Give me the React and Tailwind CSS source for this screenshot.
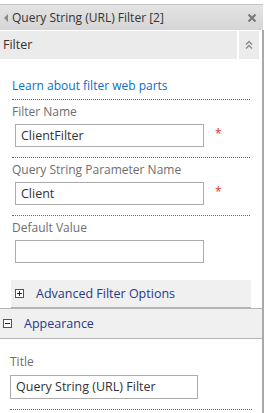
const Field = ({ label, value, required, last }) => (
    <div className={`pt-[4px] pb-[10px] ${last ? '' : 'border-b border-dotted border-[#4a63c8]'}`}>
        <div className="text-[12px] leading-[16px] text-[#6e6e6e]">{label}</div>
        <div className="mt-[4px] flex items-center">
            <div className="ml-[3px] w-[189px] h-[23px] border border-[#ababab] bg-white px-[5px] text-[12.5px] leading-[21px] text-[#333]">
                {value}
            </div>
            {required && <span className="ml-[11px] -mt-[4px] text-[12px] leading-[16px] text-[#d9302c]">*</span>}
        </div>
    </div>
);

const App = () => {
    return (
        <div className="w-[265px] h-[413px] bg-white overflow-hidden pt-[4px]" style={{ fontFamily: '"Open Sans", "Noto Sans", sans-serif' }}>
            {/* tool pane header */}
            <div className="w-[263px] h-[26px] flex items-center border-t border-[#c4c4c4] bg-gradient-to-b from-[#e4e4e4] to-[#d5d5d5]">
                <svg width="8" height="10" viewBox="0 0 8 10" className="ml-[3px]">
                    <path d="M5 1 L1 5 L5 9 Z" fill="#8a8a8a" />
                </svg>
                <span className="ml-[1px] text-[12px] leading-[20px] text-[#333]">Query String (URL) Filter [2]</span>
                <svg width="10" height="10" viewBox="0 0 10 10" className="ml-auto mr-[6px]">
                    <path d="M1.5 1.5 L8.5 8.5 M8.5 1.5 L1.5 8.5" stroke="#7a7a7a" strokeWidth="2.2" />
                </svg>
            </div>

            <div className="w-[264px] border-r-2 border-[#a9a9a9]">
                {/* Filter section bar */}
                <div className="flex gap-[2px] pt-[1px] h-[29px]">
                    <div className="w-[237px] bg-[#ebebeb] pl-[3px] flex items-center text-[12.5px] text-[#333]">Filter</div>
                    <div className="w-[20px] bg-[#ebebeb] flex items-center justify-center">
                        <svg width="8" height="10" viewBox="0 0 8 10">
                            <path d="M1 4.5 L4 1.5 L7 4.5 M1 8.5 L4 5.5 L7 8.5" stroke="#8a8a8a" strokeWidth="1.4" fill="none" />
                        </svg>
                    </div>
                </div>

                <div className="px-[12px]">
                    <div className="pt-[19px] pb-[5px] text-[12px] leading-[16px] border-b border-dotted border-[#4a63c8]">
                        <span className="text-[#0a6fc2]">Learn about filter web parts</span>
                    </div>
                    <Field label="Filter Name" value="ClientFilter" required />
                    <Field label="Query String Parameter Name" value="Client" required />
                    <Field label="Default Value" value="" last />
                </div>

                {/* advanced options */}
                <div className="ml-[11px] mr-[11px] mt-[7px] h-[28px] bg-[#f0f0f0] border-b border-[#b4b4b4] flex items-center">
                    <div className="ml-[4px] w-[9px] h-[9px] border border-[#555] bg-white flex items-center justify-center">
                        <svg width="7" height="7" viewBox="0 0 7 7">
                            <path d="M1 3.5 H6 M3.5 1 V6" stroke="#222" strokeWidth="1" />
                        </svg>
                    </div>
                    <span className="ml-[12px] text-[12.5px] leading-[16px] text-[#27398a]">Advanced Filter Options</span>
                </div>

                {/* appearance */}
                <div className="h-[31px] bg-[#f0f0f0] border-y border-[#b4b4b4] flex items-center">
                    <div className="ml-[3px] w-[9px] h-[9px] border border-[#555] bg-white flex items-center justify-center">
                        <svg width="7" height="7" viewBox="0 0 7 7">
                            <path d="M1 3.5 H6" stroke="#222" strokeWidth="1" />
                        </svg>
                    </div>
                    <span className="ml-[12px] text-[12.5px] leading-[16px] text-[#27398a]">Appearance</span>
                </div>

                <div className="px-[10px] pt-[15px]">
                    <div className="pb-[10px] border-b border-dotted border-[#4a63c8]">
                        <div className="text-[12px] leading-[16px] text-[#6e6e6e]">Title</div>
                        <div className="mt-[5px] w-[188px] h-[24px] border border-[#ababab] bg-white px-[5px] text-[12.5px] leading-[22px] text-[#333]">
                            Query String (URL) Filter
                        </div>
                    </div>
                    <div className="h-[20px]" />
                </div>
            </div>
        </div>
    );
};

export default App;
